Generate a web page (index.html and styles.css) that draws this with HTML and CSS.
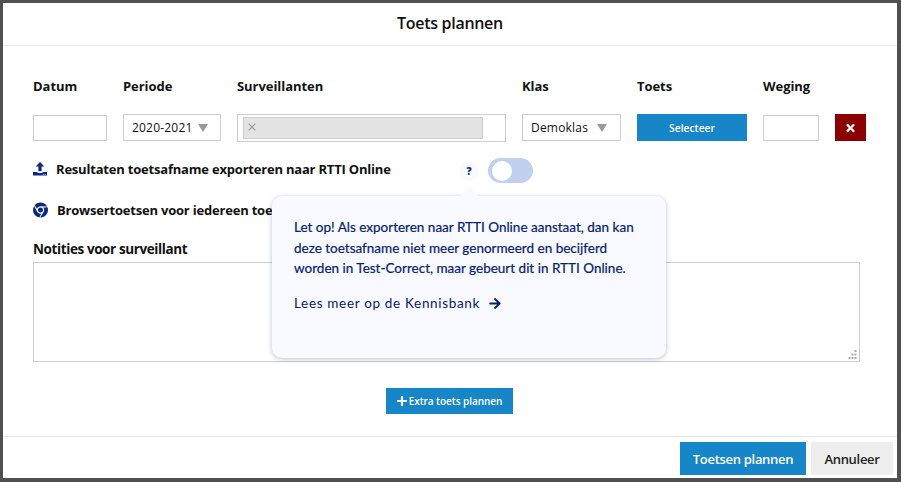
FILE: index.html
```html
<!DOCTYPE html>
<html lang="nl">
<head>
<meta charset="utf-8">
<title>Toets plannen</title>
<link rel="stylesheet" href="styles.css">
</head>
<body>
<div class="modal">
  <header class="modal-head">Toets plannen</header>
  <main class="modal-body">
    <div class="plan-grid">
      <div class="label">Datum</div>
      <div class="label">Periode</div>
      <div class="label">Surveillanten</div>
      <div class="label">Klas</div>
      <div class="label">Toets</div>
      <div class="label">Weging</div>
      <div></div>
      <input class="field" type="text">
      <div class="select"><span>2020-2021</span><i class="caret"></i></div>
      <div class="multi"><div class="chip"><svg class="chip-x" viewBox="0 0 8 8"><path d="M.7.7l6.6 6.6M7.3.7L.7 7.3"/></svg></div></div>
      <div class="select select-klas"><span>Demoklas</span><i class="caret"></i></div>
      <button class="btn btn-select" type="button">Selecteer</button>
      <input class="field" type="text">
      <button class="btn btn-delete" type="button" aria-label="Verwijderen"><svg viewBox="0 0 352 512"><path d="M242.72 256l100.07-100.07c12.28-12.28 12.28-32.19 0-44.48l-22.24-22.24c-12.28-12.28-32.19-12.28-44.48 0L176 189.28 75.93 89.21c-12.28-12.28-32.19-12.28-44.48 0L9.21 111.45c-12.28 12.28-12.28 32.19 0 44.48L109.28 256 9.21 356.07c-12.28 12.28-12.28 32.19 0 44.48l22.24 22.24c12.28 12.28 32.2 12.28 44.48 0L176 322.72l100.07 100.07c12.28 12.28 32.2 12.28 44.48 0l22.24-22.24c12.28-12.28 12.28-32.19 0-44.48L242.72 256z"/></svg></button>
    </div>

    <div class="option option-export">
      <svg class="opt-icon" viewBox="0 0 14 14"><path d="M7 0l4.400 4.600H8.600v4.600H5.400V4.600H2.600z"/><path fill-rule="evenodd" d="M0 10h4.500v1h5v-1H14v3.500H0zM9.800 12v.8h1V12zM11.700 12v.8h1V12z"/></svg>
      <span class="opt-text">Resultaten toetsafname exporteren naar RTTI Online</span>
      <span class="help">?</span>
      <span class="toggle"><i class="knob"></i></span>
    </div>

    <div class="option option-browser">
      <svg class="opt-icon" viewBox="0 0 496 512"><path d="M131.5 217.500L55.100 100.100c47.600-59.200 119-91.800 192-92.100 42.300-.3 85.500 10.500 124.800 33.200 43.400 25.200 76.400 61.400 97.400 103L264 133.400c-58.100-3.400-113.400 29.300-132.500 84.100zm32.900 38.500c0 46.200 37.400 83.600 83.600 83.600s83.600-37.400 83.600-83.600-37.400-83.600-83.600-83.600-83.600 37.500-83.600 83.600zm314.900-89.200L339.600 174c37.900 44.300 38.500 108.200 6.600 157.200L234.100 503.600c46.500 2.500 94.400-7.700 137.800-32.900 107.400-62 150.900-192 107.400-303.900zM133.700 303.600L40.400 120.100C14.900 159.100 0 205.900 0 256c0 124 90.800 226.700 209.500 244.900l63.700-124.800c-57.600 10.800-113.200-20.800-139.500-72.500z"/></svg>
      <span class="opt-text">Browsertoetsen voor iedereen toestaan</span>
    </div>

    <div class="label notes-label">Notities voor surveillant</div>
    <div class="notes-wrap">
      <textarea class="notes"></textarea>
      <svg class="grip" viewBox="0 0 9 9"><path d="M6.500 0h2v2h-2zM3.500 3.500h2v2h-2zM6.500 3.500h2v2h-2zM.5 7h2v2h-2zM3.500 7h2v2h-2zM6.500 7h2v2h-2z"/></svg>
    </div>

    <div class="extra-row">
      <button class="btn btn-extra" type="button"><svg viewBox="0 0 448 512"><path d="M416 208H272V64c0-17.670-14.330-32-32-32h-32c-17.670 0-32 14.330-32 32v144H32c-17.670 0-32 14.330-32 32v32c0 17.670 14.330 32 32 32h144v144c0 17.670 14.330 32 32 32h32c17.670 0 32-14.330 32-32V304h144c17.670 0 32-14.330 32-32v-32c0-17.670-14.330-32-32-32z"/></svg>Extra toets plannen</button>
    </div>
  </main>
  <footer class="modal-foot">
    <button class="btn btn-primary" type="button">Toetsen plannen</button>
    <button class="btn btn-cancel" type="button">Annuleer</button>
  </footer>

  <aside class="tooltip">
    <i class="tip-arrow"></i>
    <p class="tip-text">Let op! Als exporteren naar RTTI Online aanstaat, dan kan deze toetsafname niet meer genormeerd en becijferd worden in Test-Correct, maar gebeurt dit in RTTI Online.</p>
    <a class="tip-link">Lees meer op de Kennisbank <svg viewBox="0 0 448 512"><path d="M190.500 66.900l22.200-22.200c9.400-9.400 24.600-9.400 33.900 0L441 239c9.400 9.400 9.400 24.600 0 33.900L246.600 467.300c-9.400 9.400-24.600 9.400-33.900 0l-22.200-22.200c-9.500-9.500-9.300-25 .4-34.300L311.400 296H24c-13.300 0-24-10.700-24-24v-32c0-13.300 10.700-24 24-24h287.400L190.900 101.200c-9.800-9.300-10-24.800-.4-34.300z"/></svg></a>
  </aside>
</div>
</body>
</html>
```

FILE: styles.css
```css
* { box-sizing: border-box; }
html, body { margin: 0; height: 100%; }
body { font-family: "Open Sans", "Noto Sans", sans-serif; color: #111; background: #fff; overflow: hidden; }

.modal {
  position: relative;
  height: 482px;
  border: solid #505050;
  border-width: 3px 4px 4px 3px;
  background: #fff;
  display: flex;
  flex-direction: column;
}
.modal-head {
  height: 43px;
  flex: none;
  border-bottom: 1px solid #eaeaea;
  padding-bottom: 2px;
  display: flex;
  align-items: center;
  justify-content: center;
  font-size: 16px;
  font-weight: 600;
  letter-spacing: -.3px;
  line-height: 40px;
}
.modal-body { flex: 1; padding: 30px 0 0 30px; min-height: 0; }

.plan-grid {
  display: grid;
  grid-template-columns: 74px 98px 269px 99px 110px 56px 31px;
  grid-template-rows: 20px 28px;
  column-gap: 16px;
  row-gap: 18px;
  align-items: start;
}
.label { font-size: 13px; font-weight: 700; line-height: 20px; letter-spacing: -.05px; }

.field { height: 26px; width: 100%; margin: 1px 0 0; border: 1px solid #ccc; background: #fff; padding: 0; }
.select {
  height: 27px;
  border: 1px solid #ccc;
  display: flex;
  align-items: center;
  justify-content: space-between;
  padding: 0 12px 0 8px;
  font-size: 12px;
  letter-spacing: .2px;
}
.select-klas { padding-right: 13px; }
.caret { width: 0; height: 0; border: 5px solid transparent; border-width: 8px 5px 0; border-top-color: #999; }
.multi { height: 28px; border: 1px solid #ccc; padding: 2px 22px 2px 5px; }
.chip { height: 22px; background: #e3e3e3; border: 1px solid #ccc; display: flex; align-items: center; padding: 0 0 2px 4px; }
.chip-x { width: 8px; height: 8px; fill: none; stroke: #999; stroke-width: 1.200; }

.btn { border: 0; padding: 0; margin: 0; font-family: inherit; color: #fff; background: #1786c8; display: flex; align-items: center; justify-content: center; }
.btn-select { height: 27px; font-size: 10.300px; font-weight: 600; }
.btn-delete { height: 27px; background: #8b0000; }
.btn-delete svg { width: 9px; height: 12px; fill: #fff; }

.option { display: flex; align-items: center; font-size: 13px; font-weight: 700; letter-spacing: -.2px; }
.opt-icon { flex: none; fill: #0b2a7d; }
.option-export { height: 25px; margin-top: 16px; }
.option-export .opt-icon { width: 14px; height: 14px; margin: 0 9px 3px 0; }
.option-export .opt-text { width: 403px; flex: none; margin-bottom: 3px; }
.option-browser { height: 20px; margin-top: 17px; }
.option-browser .opt-icon { width: 15px; height: 16px; margin-right: 9px; }

.help {
  width: 20px; height: 20px; border-radius: 50%; background: #f9faff; color: #0b2a7d;
  display: flex; align-items: center; justify-content: center;
  font-size: 10px; font-weight: 800;
  flex: none;
}
.toggle { width: 45px; height: 25px; margin-left: 9px; border-radius: 13px; background: #c1d0ee; display: flex; align-items: center; padding-left: 4px; flex: none; }
.knob { width: 20px; height: 20px; border-radius: 50%; background: #fff; }

.notes-label { margin-top: 19px; height: 20px; font-size: 13.500px; letter-spacing: -.4px; }
.notes-wrap { position: relative; width: 827px; height: 100px; margin-top: 3px; }
.notes { display: block; width: 100%; height: 100%; margin: 0; border: 1px solid #ccc; background: #fff; padding: 0; resize: none; }
.grip { position: absolute; right: 3px; bottom: 3px; width: 9px; height: 9px; fill: #a8a8a8; }

.extra-row { display: flex; margin: 26px 0 0 353px; }
.btn-extra { width: 127px; height: 26px; font-size: 10px; font-weight: 600; letter-spacing: -.05px; }
.btn-extra svg { width: 10px; height: 12px; margin-right: 2px; fill: #fff; }

.modal-foot {
  height: 42px; flex: none;
  border-top: 1px solid #e8e8e8;
  display: flex;
  justify-content: flex-end;
  gap: 5px;
  padding: 5px 4px 3px 0;
}
.btn-primary { width: 126px; height: 33px; font-size: 13px; font-weight: 600; letter-spacing: -.3px; }
.btn-cancel { width: 82px; height: 33px; font-size: 13px; font-weight: 600; letter-spacing: -.3px; color: #222; background: #eee; }

.tooltip {
  position: absolute;
  left: 269px;
  top: 193px;
  width: 394px;
  height: 162px;
  padding: 21px 22px 0;
  background: #f9faff;
  border-radius: 10px;
  box-shadow: 0 1px 5px rgba(20, 30, 90, .28);
  color: #04206f;
  font-family: Lato, "Open Sans", sans-serif;
}
.tip-arrow {
  position: absolute;
  left: 188px; top: -10px;
  width: 0; height: 0;
  border: 9px solid transparent;
  border-top: 0;
  border-bottom: 10px solid #f9faff;
}
.tip-text { margin: 0; font-size: 13.500px; line-height: 20.500px; -webkit-text-stroke: .2px #04206f; }
.tip-link { display: flex; align-items: center; margin-top: 14.500px; font-size: 13.500px; line-height: 20px; letter-spacing: .67px; }
.tip-link svg { width: 12px; height: 13px; margin-left: 9px; fill: #04206f; }
```
